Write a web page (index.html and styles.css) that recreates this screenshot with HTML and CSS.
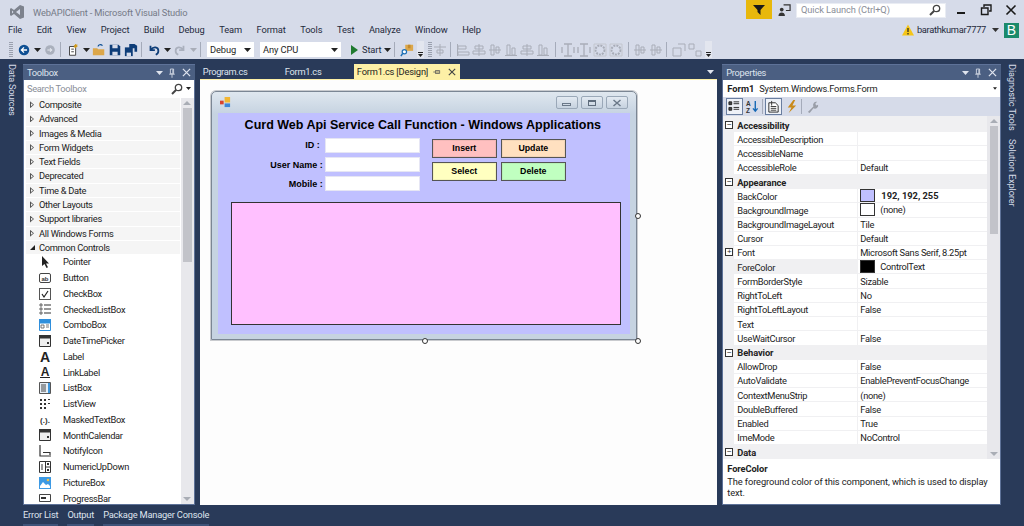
FILE: index.html
```html
<!DOCTYPE html>
<html lang="en">
<head>
<meta charset="utf-8">
<title>WebAPIClient - Microsoft Visual Studio</title>
<link rel="stylesheet" href="styles.css">
</head>
<body>
<svg class="defs" aria-hidden="true">
  <symbol id="arrow" viewBox="0 0 7 4"><path d="M0 0h7L3.500 4z" fill="currentColor"/></symbol>
  <symbol id="pin" viewBox="0 0 10 12"><path d="M3 1h4v6H3zM1.500 7.500h7M5 8v4M6 1.500v5" fill="none" stroke="currentColor"/></symbol>
  <symbol id="close" viewBox="0 0 10 10"><path d="M1 1l8 8M9 1l-8 8" stroke="currentColor" stroke-width="1.400"/></symbol>
  <symbol id="search" viewBox="0 0 12 12"><circle cx="7.500" cy="4.500" r="3.200" fill="none" stroke="currentColor" stroke-width="1.300"/><path d="M5 7l-4 4" stroke="currentColor" stroke-width="2"/></symbol>
  <symbol id="al" viewBox="0 0 14 14"><path d="M1.500 1v12M2 3h8v3H2zM2 9h11v3H2z" fill="none" stroke="#a9adb8"/></symbol>
  <symbol id="ac" viewBox="0 0 14 14"><path d="M7 1v12M3 3h8v3H3zM1 8h12v3H1z" fill="none" stroke="#a9adb8"/></symbol>
  <symbol id="am" viewBox="0 0 14 14"><path d="M1 7h12M3 2h3v10H3zM8 4h3v6H8z" fill="none" stroke="#a9adb8"/></symbol>
  <symbol id="ab" viewBox="0 0 14 14"><path d="M1 12.500h12M3 2h3v10H3zM8 5h3v7H8z" fill="none" stroke="#a9adb8"/></symbol>
  <symbol id="sz" viewBox="0 0 14 14"><path d="M3 1h8M3 13h8M7 1v12M1 4v6M13 4v6" fill="none" stroke="#a9adb8" stroke-width="1.300"/></symbol>
  <symbol id="gr" viewBox="0 0 14 14"><circle cx="7" cy="7" r="4.500" fill="none" stroke="#a9adb8" stroke-width="2" stroke-dasharray="2 1"/><path d="M1 1h12v12H1z" fill="none" stroke="#c3c6ce"/></symbol>
</svg>

<div class="app">
<header class="head">
  <div class="titlerow">
    <svg class="vslogo" viewBox="0 0 16 16"><path d="M11 1l4 1.500v11L11 15 5 10l-3 2-1-1V5l1-1 3 2z" fill="#7d828d"/><path d="M3 6.500v3L4.500 8zM11 5L7 8l4 3z" fill="#d6dbe9"/></svg>
    <span class="apptitle">WebAPIClient - Microsoft Visual Studio</span>
    <span class="spring"></span>
    <span class="filter"><svg viewBox="0 0 12 12"><path d="M0 1h12L7.500 6v5l-3-3V6z" fill="#1a1a1a"/></svg></span>
    <svg class="feedback" viewBox="0 0 14 14"><circle cx="4" cy="6" r="2" fill="#333"/><path d="M0.500 13c0-5 7-5 7 0z" fill="#333"/><path d="M6 1h7v6H8.500" fill="none" stroke="#333" stroke-width="1.300"/></svg>
    <div class="quick"><span>Quick Launch (Ctrl+Q)</span><svg class="i12"><use href="#search"/></svg></div>
    <div class="winbtns">
      <svg viewBox="0 0 12 12"><path d="M2 8h8v2H2z" fill="#1a1a1a"/></svg>
      <svg viewBox="0 0 12 12"><path d="M4 3V1h7v6H9M1.500 4h6.500v6.500H1.500z" fill="none" stroke="#1a1a1a" stroke-width="1.400"/></svg>
      <svg viewBox="0 0 12 12"><path d="M1.500 1.500l9 9M10.500 1.500l-9 9" stroke="#1a1a1a" stroke-width="1.600"/></svg>
    </div>
  </div>
  <div class="menurow">
    <nav class="menu"><span>File</span><span>Edit</span><span>View</span><span>Project</span><span>Build</span><span>Debug</span><span>Team</span><span>Format</span><span>Tools</span><span>Test</span><span>Analyze</span><span>Window</span><span>Help</span></nav>
    <span class="spring"></span>
    <svg class="warn" viewBox="0 0 12 12"><path d="M6 .5L12 11.500H0z" fill="#f5c518"/><path d="M6 4v4M6 9v1.500" stroke="#222" stroke-width="1.200"/></svg>
    <span class="user">barathkumar7777</span>
    <svg class="caret"><use href="#arrow"/></svg>
    <span class="avatar">B</span>
  </div>
  <div class="toolrow">
    <span class="grip"></span>
    <svg class="ti" viewBox="0 0 16 16"><circle cx="8" cy="8" r="6" fill="#0e4f93"/><path d="M11.500 8H5.500M8 5L5 8l3 3" fill="none" stroke="#fff" stroke-width="1.500"/></svg>
    <svg class="caret c-dark"><use href="#arrow"/></svg>
    <svg class="ti" viewBox="0 0 16 16"><circle cx="8" cy="8" r="5.500" fill="#aab0bd"/><path d="M5 8h5M8 6l2 2-2 2" fill="none" stroke="#e6e9f1" stroke-width="1.200"/></svg>
    <span class="sep"></span>
    <svg class="ti" viewBox="0 0 16 16"><path d="M4 4h7v10H4z" fill="#fff" stroke="#333"/><path d="M6 7h3M6 10h3" stroke="#333"/><path d="M11 1v5M9 3l4 1M13 2l-4 3" stroke="#d09a1e" stroke-width="1.200"/></svg>
    <svg class="caret c-dark"><use href="#arrow"/></svg>
    <svg class="ti" viewBox="0 0 16 16"><path d="M1 6h5l1 1h7v7H1z" fill="#dca74b"/><path d="M7 4c0-2 3-3 5-1" fill="none" stroke="#0e4f93" stroke-width="1.400"/></svg>
    <svg class="ti" viewBox="0 0 16 16"><path d="M2 2h10l2 2v10H2z" fill="#0e3d78"/><path d="M5 2h6v4H5zM5 10h6v4H5z" fill="#d6dbe9"/></svg>
    <svg class="ti" viewBox="0 0 16 16"><path d="M6 1h6l3 2v7h-3V6H6z" fill="#0e3d78"/><path d="M1 5h9v10H1z" fill="#0e3d78"/><path d="M3 11h5v4H3z" fill="#d6dbe9"/></svg>
    <span class="sep"></span>
    <svg class="ti" viewBox="0 0 16 16"><path d="M4 3v5h5M4.500 7.500C7 4 13 4 13 9c0 2-1 3.500-3 4.500" fill="none" stroke="#0e3d78" stroke-width="2"/></svg>
    <svg class="caret c-dark"><use href="#arrow"/></svg>
    <svg class="ti" viewBox="0 0 16 16"><path d="M12 3v5H7M11.500 7.500C9 4 3 4 3 9c0 2 1 3.500 3 4.500" fill="none" stroke="#aab0bd" stroke-width="2"/></svg>
    <svg class="caret c-gray"><use href="#arrow"/></svg>
    <span class="sep"></span>
    <div class="combo combo-a"><span>Debug</span><svg class="caret c-dark"><use href="#arrow"/></svg></div>
    <div class="combo combo-b"><span>Any CPU</span><svg class="caret c-dark"><use href="#arrow"/></svg></div>
    <svg class="play" viewBox="0 0 8 12"><path d="M1 1l7 5-7 5z" fill="#1f7a2f"/></svg>
    <span class="start">Start</span>
    <svg class="caret c-dark"><use href="#arrow"/></svg>
    <span class="sep"></span>
    <svg class="ti" viewBox="0 0 16 16"><path d="M6 2h9v7H6z" fill="#dca74b"/><path d="M9 2h3v4H9z" fill="#c28a2c"/><circle cx="5" cy="10" r="2.500" fill="#fff" stroke="#1b6fb5" stroke-width="1.400"/><path d="M3 12l-2 3" stroke="#1b6fb5" stroke-width="1.600"/></svg>
    <span class="over"><i></i><svg class="caret c-dark"><use href="#arrow"/></svg></span>
    <span class="grip grip2"></span>
    <svg class="ti" viewBox="0 0 14 14"><path d="M1 4h12M7 1v12M4 7h6v3H4z" fill="none" stroke="#a9adb8"/></svg>
    <span class="sep"></span>
    <svg class="ti"><use href="#al"/></svg><svg class="ti"><use href="#ac"/></svg><svg class="ti"><use href="#am"/></svg><svg class="ti"><use href="#ab"/></svg>
    <svg class="ti"><use href="#ac"/></svg><svg class="ti"><use href="#ab"/></svg>
    <span class="sep sep-w"></span>
    <svg class="ti"><use href="#sz"/></svg><svg class="ti"><use href="#sz"/></svg><svg class="ti"><use href="#gr"/></svg><svg class="ti"><use href="#gr"/></svg>
    <span class="sep sep-w"></span>
    <svg class="ti"><use href="#am"/></svg><svg class="ti"><use href="#am"/></svg>
    <span class="sep"></span>
    <svg class="ti" viewBox="0 0 14 14"><path d="M1 5h8v8H1zM6 1h7v7" fill="none" stroke="#a9adb8"/></svg>
    <svg class="ti" viewBox="0 0 14 14"><path d="M1 1h5v5H1zM8 8h5v5H8z" fill="none" stroke="#a9adb8"/></svg>
    <span class="over"><i></i><svg class="caret c-dark"><use href="#arrow"/></svg></span>
  </div>
</header>

<main class="work">
  <aside class="rail"><span class="railtab">Data Sources</span></aside>

  <section class="panel toolbox">
    <div class="ptitle"><span>Toolbox</span><svg class="caret"><use href="#arrow"/></svg><svg class="pin"><use href="#pin"/></svg><svg class="x"><use href="#close"/></svg></div>
    <div class="tbsearch"><span>Search Toolbox</span><svg class="i12"><use href="#search"/></svg><svg class="caret c-dark"><use href="#arrow"/></svg></div>
    <div class="tbbody">
      <div class="tblist">
        <div class="cat"><i class="tri"></i>Composite</div>
        <div class="cat"><i class="tri"></i>Advanced</div>
        <div class="cat"><i class="tri"></i>Images &amp; Media</div>
        <div class="cat"><i class="tri"></i>Form Widgets</div>
        <div class="cat"><i class="tri"></i>Text Fields</div>
        <div class="cat"><i class="tri"></i>Deprecated</div>
        <div class="cat"><i class="tri"></i>Time &amp; Date</div>
        <div class="cat"><i class="tri"></i>Other Layouts</div>
        <div class="cat"><i class="tri"></i>Support libraries</div>
        <div class="cat"><i class="tri"></i>All Windows Forms</div>
        <div class="cat"><i class="tri open"></i>Common Controls</div>
        <div class="tool"><svg viewBox="0 0 12 12"><path d="M3 0v10l2.500-2 2 4 1.500-.8L7 7.500h3z" fill="#222"/></svg>Pointer</div>
        <div class="tool"><svg viewBox="0 0 12 12"><rect x=".5" y="1.500" width="11" height="9" rx="1.500" fill="none" stroke="#444"/><text x="6" y="8.500" class="ic-t">ab</text></svg>Button</div>
        <div class="tool"><svg viewBox="0 0 12 12"><rect x=".5" y=".5" width="11" height="11" fill="none" stroke="#555"/><path d="M3 6l2 3 4-6" fill="none" stroke="#222" stroke-width="1.200"/></svg>CheckBox</div>
        <div class="tool"><svg viewBox="0 0 12 12"><path d="M1 1h2v2H1zM1 5h2v2H1zM1 9h2v2H1z" fill="none" stroke="#444" stroke-width=".8"/><path d="M5 2h7M5 6h7M5 10h7" stroke="#333" stroke-width="1.200"/></svg>CheckedListBox</div>
        <div class="tool"><svg viewBox="0 0 12 12"><path d="M0 0h12v4H0z" fill="#2f8fdc"/><path d="M.5 4h11v7.500H.5z" fill="#fff" stroke="#2f8fdc"/><path d="M2 6h3v3H2zM7 6h3M7 8h3" fill="none" stroke="#555" stroke-width=".8"/></svg>ComboBox</div>
        <div class="tool"><svg viewBox="0 0 12 12"><path d="M.5.5h11v11H.5z" fill="#eee" stroke="#333"/><path d="M0 0h12v3.500H0zM8 7h2v2H8z" fill="#333"/></svg>DateTimePicker</div>
        <div class="tool"><svg viewBox="0 0 12 12"><text x="6" y="11" class="ic-a">A</text></svg>Label</div>
        <div class="tool"><svg viewBox="0 0 12 12"><text x="6" y="10" class="ic-l">A</text><path d="M1 11.500h10" stroke="#222"/></svg>LinkLabel</div>
        <div class="tool"><svg viewBox="0 0 12 12"><path d="M.5.5h11v11H.5z" fill="#e6eef6" stroke="#555"/><path d="M9 1h2v10H9z" fill="#3d96dc"/><path d="M2 3h5M2 5h5M2 7h5M2 9h5" stroke="#444"/></svg>ListBox</div>
        <div class="tool"><svg viewBox="0 0 12 12"><path d="M1 1h2v2H1zM5 1h2v2H5zM9 1h2v1H9zM1 5h2v2H1zM5 5h2v2H5zM9 5h2v1H9zM1 9h2v2H1zM5 9h2v2H5z" fill="#333"/></svg>ListView</div>
        <div class="tool"><svg viewBox="0 0 12 12"><text x="6" y="9" class="ic-m">(.).</text></svg>MaskedTextBox</div>
        <div class="tool"><svg viewBox="0 0 12 12"><path d="M.5.5h11v11H.5z" fill="#eee" stroke="#333"/><path d="M0 0h12v3.500H0zM8 7h2v2H8z" fill="#333"/></svg>MonthCalendar</div>
        <div class="tool"><svg viewBox="0 0 12 12"><path d="M1 0v11h11M4 7.500h7V10" fill="none" stroke="#333" stroke-width="1.200"/></svg>NotifyIcon</div>
        <div class="tool"><svg viewBox="0 0 12 12"><path d="M.5.500h11v11H.5zM6.500.5v11M6.500 6h5M3 3v6" fill="none" stroke="#333"/><path d="M8 2h2v2H8zM8 8h2v2H8z" fill="#333"/></svg>NumericUpDown</div>
        <div class="tool"><svg viewBox="0 0 12 12"><path d="M0 0h12v12H0z" fill="#3d9ae4"/><path d="M1 9l3-4 3 3 2-1 2 2v2H1z" fill="#fff"/><circle cx="9" cy="3" r="1.300" fill="#f2c14b"/></svg>PictureBox</div>
        <div class="tool"><svg viewBox="0 0 12 12"><path d="M.5 2.500h11v7H.5z" fill="none" stroke="#444"/><path d="M2 5h5v2H2z" fill="#333"/></svg>ProgressBar</div>
      </div>
      <div class="scroll tbscroll"><i class="up"></i><b class="thumb"></b><span class="spring"></span><i class="down"></i></div>
    </div>
  </section>

  <section class="doc">
    <div class="tabs">
      <span class="tab">Program.cs</span>
      <span class="tab tab2">Form1.cs</span>
      <span class="tab active"><span class="tabname">Form1.cs [Design]</span><svg class="pin2" viewBox="0 0 10 8"><path d="M0 4h3M3 1.500v5M3.500 2h5v4h-5M3.500 4h5" fill="none" stroke="#555"/></svg><svg class="x2"><use href="#close"/></svg></span>
      <span class="spring"></span>
      <svg class="caret tabcaret"><use href="#arrow"/></svg>
    </div>
    <div class="canvas">
      <div class="window">
        <div class="wtitle">
          <svg class="wicon" viewBox="0 0 12 12"><path d="M5 0h6v6H5z" fill="#f2b632"/><path d="M0 4h4v4H0z" fill="#d8432e"/><path d="M5 7h6v4H5z" fill="#3d86d8"/></svg>
          <span class="spring"></span>
          <span class="wbtn wb1"><i class="wmin"></i></span>
          <span class="wbtn wb2"><i class="wmax"></i></span>
          <span class="wbtn wb3"><svg viewBox="0 0 10 8"><path d="M1.500 1l7 6M8.500 1l-7 6" stroke="#6a7888" stroke-width="1.500"/></svg></span>
        </div>
        <div class="client">
          <h1 class="ftitle">Curd Web Api Service Call Function - Windows Applications</h1>
          <div class="fmain">
            <div class="fields">
              <label class="flabel l-id">ID :</label><span class="fin"></span>
              <label class="flabel">User Name :</label><span class="fin"></span>
              <label class="flabel l-mo">Mobile :</label><span class="fin"></span>
            </div>
            <div class="btns">
              <span class="fbtn pink">Insert</span><span class="fbtn peach">Update</span>
              <span class="fbtn yellow">Select</span><span class="fbtn green">Delete</span>
            </div>
          </div>
          <div class="grid"></div>
        </div>
        <i class="handle h-r"></i><i class="handle h-b"></i><i class="handle h-c"></i>
      </div>
    </div>
  </section>

  <section class="panel props">
    <div class="ptitle"><span>Properties</span><svg class="caret"><use href="#arrow"/></svg><svg class="pin"><use href="#pin"/></svg><svg class="x"><use href="#close"/></svg></div>
    <div class="objsel"><b>Form1</b><span>System.Windows.Forms.Form</span><em></em><svg class="caret c-dark"><use href="#arrow"/></svg></div>
    <div class="ptools">
      <span class="pt on"><svg viewBox="0 0 14 14"><path d="M1 2h3v3H1zM1 8h3v3H1z" fill="#444" stroke="#222"/><path d="M6 2h6M6 4h6M6 8h6M6 10h6" stroke="#222"/></svg></span>
      <span class="pt"><svg viewBox="0 0 14 14"><text x="0" y="6.500" class="ic-z">A</text><text x="0" y="13.500" class="ic-z">Z</text><path d="M10 1v11M7.500 9l2.500 3 2.500-3" fill="none" stroke="#1769b5" stroke-width="1.500"/></svg></span>
      <span class="psep"></span>
      <span class="pt on"><svg viewBox="0 0 14 14"><path d="M2 3h7l3 3v7H2z" fill="#fff" stroke="#222"/><path d="M4 7h6M4 9h6M4 11h6M5 1v5" stroke="#333"/></svg></span>
      <span class="pt"><svg viewBox="0 0 14 14"><path d="M9 0L3 8h4l-3 6 8-8H8l3-6z" fill="#c98a1b"/></svg></span>
      <span class="psep"></span>
      <span class="pt"><svg viewBox="0 0 14 14"><path d="M2 13l6-6a3.500 3.500 0 0 1 4-5L10 4l1 2 2-1a3.500 3.500 0 0 1-5 4l-4 5z" fill="#9a9ea8"/></svg></span>
    </div>
    <div class="pbody">
      <div class="pgrid">
        <div class="pcat"><i class="box">&minus;</i>Accessibility</div>
        <div class="prow"><span>AccessibleDescription</span><span></span></div>
        <div class="prow"><span>AccessibleName</span><span></span></div>
        <div class="prow"><span>AccessibleRole</span><span>Default</span></div>
        <div class="pcat"><i class="box">&minus;</i>Appearance</div>
        <div class="prow"><span>BackColor</span><span class="val"><i class="sw" ></i><b>192, 192, 255</b></span></div>
        <div class="prow"><span>BackgroundImage</span><span class="val"><i class="sw sw-w"></i>(none)</span></div>
        <div class="prow"><span>BackgroundImageLayout</span><span>Tile</span></div>
        <div class="prow"><span>Cursor</span><span>Default</span></div>
        <div class="prow plus"><i class="box">+</i><span>Font</span><span>Microsoft Sans Serif, 8.25pt</span></div>
        <div class="prow sel"><span>ForeColor</span><span class="val"><i class="sw sw-k"></i>ControlText</span></div>
        <div class="prow"><span>FormBorderStyle</span><span>Sizable</span></div>
        <div class="prow"><span>RightToLeft</span><span>No</span></div>
        <div class="prow"><span>RightToLeftLayout</span><span>False</span></div>
        <div class="prow"><span>Text</span><span></span></div>
        <div class="prow"><span>UseWaitCursor</span><span>False</span></div>
        <div class="pcat"><i class="box">&minus;</i>Behavior</div>
        <div class="prow"><span>AllowDrop</span><span>False</span></div>
        <div class="prow"><span>AutoValidate</span><span>EnablePreventFocusChange</span></div>
        <div class="prow"><span>ContextMenuStrip</span><span>(none)</span></div>
        <div class="prow"><span>DoubleBuffered</span><span>False</span></div>
        <div class="prow"><span>Enabled</span><span>True</span></div>
        <div class="prow"><span>ImeMode</span><span>NoControl</span></div>
        <div class="pcat"><i class="box">&minus;</i>Data</div>
      </div>
      <div class="scroll pscroll"><i class="up"></i><b class="thumb"></b><span class="spring"></span><i class="down"></i></div>
    </div>
    <div class="pdesc"><b>ForeColor</b><p>The foreground color of this component, which is used to display text.</p></div>
  </section>

  <aside class="rail rail-r"><span class="railtab">Diagnostic Tools</span><span class="railtab">Solution Explorer</span></aside>
</main>

<footer class="status"><span>Error List</span><span>Output</span><span>Package Manager Console</span></footer>
</div>
</body>
</html>
```
FILE: styles.css
```css
* { box-sizing: border-box; }
html, body { margin: 0; height: 100%; }
body { font: 9.300px/1 Roboto, "Noto Sans", sans-serif; letter-spacing: -.3px; color: #222; overflow: hidden; background: #293a59; white-space: nowrap; }
.defs { position: absolute; width: 0; height: 0; }
.app { width: 1024px; height: 526px; display: flex; flex-direction: column; }
.spring { flex: 1; }
svg { display: block; flex: none; overflow: visible; }
i, em { display: block; font-style: normal; }
.i12 { width: 12px; height: 12px; color: #444; }
.caret { width: 7px; height: 4px; color: #333; }
.c-dark { color: #222; }
.c-gray { color: #a9adb8; }

/* header */
.head { height: 59px; background: #d6dbe9; display: flex; flex-direction: column; }
.titlerow { height: 20px; display: flex; align-items: center; }
.vslogo { width: 16px; height: 16px; margin: 3px 0 0 9px; }
.apptitle { margin: 6px 0 0 8px; color: #757a87; letter-spacing: -.15px; }
.filter { width: 26px; height: 19px; background: #e8b80c; display: flex; align-items: center; justify-content: center; align-self: flex-start; }
.filter svg { width: 12px; height: 12px; }
.feedback { width: 13px; height: 13px; margin: 0 5px 0 6px; }
.quick { width: 150px; height: 15px; background: #fff; display: flex; align-items: center; justify-content: space-between; padding: 0 4px; color: #8a8e98; border: 1px solid #e9ecf3; letter-spacing: -.1px; }
.winbtns { display: flex; width: 78px; padding-left: 9px; gap: 13px; }
.winbtns svg { width: 12px; height: 12px; }
.menurow { height: 20px; display: flex; align-items: center; padding-right: 5px; }
.menu { display: flex; gap: 14.500px; padding-left: 8px; color: #1f2a3c; letter-spacing: -.1px; }
.warn { width: 12px; height: 12px; }
.user { margin: 0 6px 0 3px; color: #1f2a3c; }
.avatar { width: 15px; height: 15px; margin-left: 5px; background: #1b8a6b; color: #fff; font: 14px/15px "Liberation Sans", sans-serif; letter-spacing: 0; text-align: center; }
.toolrow { height: 19px; display: flex; align-items: center; padding-left: 9px; }
.ti { width: 14px; height: 14px; margin: 0 1px; }
.toolrow .caret { margin: 0 1.500px; }
.grip { width: 4px; height: 15px; margin-right: 3px; background: repeating-linear-gradient(0deg, #9aa0ae 0 1px, transparent 1px 2px); }
.grip2 { margin: 0 0 0 4px; }
.sep { width: 1px; height: 15px; background: #a5abba; margin: 0 4px 0 2px; }
.sep-w { margin-left: 4px; }
.sep-w + .ti + .ti + .ti + .ti + .sep-w { margin-right: 3px; }
.combo { height: 15px; background: #fff; display: flex; align-items: center; justify-content: space-between; padding: 0 2px 0 3px; margin: 0 6px 0 2px; color: #1e1e1e; letter-spacing: -.1px; }
.combo-a { width: 47px; }
.combo-b { width: 81px; margin-left: 0; }
.play { width: 8px; height: 12px; margin: 0 4px 0 3px; }
.start { color: #1f2a3c; width: 20px; letter-spacing: -.1px; }
.over { width: 7px; height: 17px; margin-left: 2px; background: #e3e6ef; display: flex; flex-direction: column; align-items: center; justify-content: flex-end; padding-bottom: 1px; }
.over i { width: 5px; height: 1px; background: #222; margin-bottom: 1px; }
.toolrow .over .caret { margin: 0; width: 5px; height: 3px; }

/* work */
.work { flex: 1; display: flex; min-height: 0; padding: 5px 0 0; background: #293a59; }
.rail { width: 23px; display: flex; flex-direction: column; align-items: flex-start; gap: 8px; padding-left: 8px; }
.rail-r { width: 21px; margin-left: 2px; padding-left: 5px; letter-spacing: -.15px; }
.railtab { writing-mode: vertical-rl; color: #d7dce8; }
.panel { display: flex; flex-direction: column; background: #fff; border: 1px solid #5e7298; border-top: 0; }
.ptitle { height: 16px; background: #4b5f82; color: #dfe4ee; display: flex; align-items: center; padding: 0 4px 0 4px; margin: 0 -1px; flex: none; border-top: 1px solid #5e7298; }
.ptitle span { flex: 1; }
.ptitle .caret { color: #dfe4ee; }
.pin { width: 8px; height: 10px; margin-left: 5px; color: #dfe4ee; }
.x { width: 9px; height: 9px; margin-left: 6px; color: #dfe4ee; }

.toolbox { width: 172px; margin-right: 5px; }
.tbsearch { height: 15px; flex: none; display: flex; align-items: center; padding: 0 3px; color: #8a8e98; margin-top: 1px; }
.tbsearch span { flex: 1; }
.tbsearch .caret { margin-left: 3px; width: 5px; height: 3px; }
.tbbody { flex: 1; display: flex; min-height: 0; padding-top: 2px; }
.tblist { flex: 1; padding: 0 1px 0 2px; overflow: hidden; }
.cat { height: 14.300px; background: #f5f5f5; border-bottom: 1px solid #fff; display: flex; align-items: center; padding-left: 4px; }
.tri { position: relative; width: 4px; height: 7px; background: #555; clip-path: polygon(0 0, 100% 50%, 0 100%); margin-right: 5px; }
.tri::after { content: ""; position: absolute; left: 1px; top: 2px; width: 2px; height: 3px; background: #f5f5f5; clip-path: polygon(0 0, 100% 50%, 0 100%); }
.tri.open { width: 5px; height: 5px; background: #222; clip-path: polygon(100% 0, 100% 100%, 0 100%); margin-right: 4px; }
.tri.open::after { display: none; }
.tool { height: 15.750px; display: flex; align-items: center; padding-left: 13px; }
.tool svg { width: 12px; height: 12px; margin-right: 12px; }
.cat + .tool { margin-top: -1px; }
.ic-t { font: bold 6px "Liberation Sans", sans-serif; letter-spacing: 0; text-anchor: middle; fill: #333; }
.ic-a { font: bold 14px "Liberation Sans", sans-serif; letter-spacing: 0; text-anchor: middle; fill: #222; }
.ic-l { font: bold 12px "Liberation Sans", sans-serif; letter-spacing: 0; text-anchor: middle; fill: #222; }
.ic-m { font: bold 8px "Liberation Sans", sans-serif; letter-spacing: 0; text-anchor: middle; fill: #333; }
.ic-z { font: bold 7px "Liberation Sans", sans-serif; letter-spacing: 0; fill: #333; }
.scroll { background: #e8e8ec; display: flex; flex-direction: column; align-items: center; flex: none; }
.scroll .up { width: 0; height: 0; border: 4px solid transparent; border-top: 0; border-bottom: 4px solid #a9adb5; margin-top: 3px; }
.scroll .down { width: 0; height: 0; border: 4px solid transparent; border-bottom: 0; border-top: 4px solid #a9adb5; margin-bottom: 3px; }
.thumb { background: #c2c3c9; display: block; }
.tbscroll { width: 13px; }
.tbscroll .thumb { width: 9px; height: 154px; margin-top: 3px; }

/* doc */
.doc { width: 518px; margin-right: 5px; display: flex; flex-direction: column; }
.tabs { height: 15px; display: flex; align-items: center; color: #dfe4ee; background: #293a59; flex: none; }
.tab { height: 15px; padding: 1px 3px 0; display: flex; align-items: center; }
.tab:first-child { width: 82px; }
.tab2 { width: 72px; }
.active { width: 106px; background: #fdf0a6; color: #1e1e1e; }
.tabname { width: 74px; letter-spacing: -.2px; }
.pin2 { width: 8px; height: 6px; margin-left: 2px; }
.x2 { width: 8px; height: 8px; margin-left: 7px; color: #444; }
.tabcaret { margin-right: 3px; color: #dfe4ee; }
.canvas { flex: 1; background: #fdfdfd; border-top: 1px solid #fdf0a6; padding: 11px 0 0 11px; }

.window { position: relative; width: 426px; height: 249px; border: 1px solid #7b8694; border-radius: 5px 5px 0 0; background: linear-gradient(180deg, #dfe7ef 0, #c6d3e1 22px, #c6d3e1 100%); padding: 0 6px 5px 6px; display: flex; flex-direction: column; box-shadow: 0 0 0 1px #c9cbcf; letter-spacing: 0; }
.wtitle { height: 21px; display: flex; align-items: center; flex: none; padding-right: 2px; gap: 3px; }
.wicon { width: 11px; height: 11px; margin: 0 0 0 2px; }
.wbtn { height: 13px; border: 1px solid #9aa8b8; border-radius: 2px; background: linear-gradient(180deg, #e3eaf2, #c6d2df); display: flex; align-items: center; justify-content: center; }
.wb1, .wb2, .wb3 { width: 22px; }
.wb3 svg { width: 10px; height: 8px; }
.wmin { width: 9px; height: 3px; border: 1px solid #6a7888; margin-top: 3px; }
.wmax { width: 8px; height: 6px; border: 1px solid #5e6c7c; border-top-width: 2px; }
.client { flex: 1; background: #c0c0ff; padding: 0 9px 0 13px; display: flex; flex-direction: column; }
.ftitle { margin: 0; height: 24px; padding-right: 6px; font: bold 12.500px/24px "Liberation Sans", sans-serif; color: #000; text-align: center; flex: none; }
.fmain { display: flex; height: 65px; flex: none; }
.fields { width: 176px; margin-left: 13px; display: grid; grid-template-columns: 80px 95px; grid-auto-rows: 15px; row-gap: 4px; column-gap: 1px; padding-top: 1px; align-items: center; }
.flabel { font: bold 9px "Liberation Sans", sans-serif; color: #000; text-align: right; padding-right: 1px; }
.l-id { padding-right: 4px; margin-top: -1px; }
.fin { background: #fff; border: 1px solid #e6e6f4; height: 15px; }
.btns { margin-left: 12px; display: grid; grid-template-columns: 65px 65px; grid-auto-rows: 19px; gap: 4px; padding-top: 2px; }
.fbtn { border: 1px solid #555; box-shadow: inset 0 0 0 1px rgba(0,0,0,.05); font: bold 8.800px/17px "Liberation Sans", sans-serif; color: #000; text-align: center; }
.pink { background: #ffc0c0; }
.peach { background: #ffe0c0; }
.yellow { background: #ffffc0; }
.green { background: #c0ffc0; }
.grid { height: 123px; background: #ffc0ff; border: 1px solid #333; flex: none; }
.handle { position: absolute; width: 6px; height: 6px; border: 1px solid #333; border-radius: 50%; background: #fff; }
.h-r { left: 423px; top: 121px; }
.h-b { left: 423px; top: 246px; }
.h-c { left: 210px; top: 246px; }

/* properties */
.props { width: 279px; }
.objsel { height: 17px; flex: none; display: flex; align-items: center; padding: 0 3px 0 4px; color: #222; }
.objsel b { margin-right: 5px; letter-spacing: 0; }
.objsel span { letter-spacing: -.25px; }
.objsel em { flex: 1; }
.objsel .caret { width: 4px; height: 3px; }
.ptools { height: 19px; flex: none; background: #d6dbe9; display: flex; align-items: center; padding-left: 3px; }
.pt { width: 17px; height: 17px; display: flex; align-items: center; justify-content: center; margin-right: 1px; border: 1px solid transparent; }
.pt svg { width: 13px; height: 13px; }
.pt.on { border-color: #6a7ea0; background: #eef1f7; }
.psep { width: 1px; height: 15px; background: #a5abba; margin: 0 2px 0 0; }
.pbody { flex: 1; min-height: 0; display: flex; background: #f0f0f2; }
.pgrid { flex: 1; min-width: 0; padding-top: 2px; }
.pcat { height: 14.220px; font-weight: 700; letter-spacing: -.1px; display: flex; align-items: center; background: #f0f0f2; padding: 1px 0 0 14px; position: relative; }
.box { position: absolute; left: 2px; top: 3px; width: 8px; height: 8px; border: 1px solid #333; background: #fff; font: 8px/6px "Liberation Sans", sans-serif; letter-spacing: 0; text-align: center; }
.prow { position: relative; height: 14.220px; margin-left: 11px; display: grid; grid-template-columns: 123px 1fr; align-items: stretch; background: #fff; border-bottom: 1px solid #f0f0f2; }
.prow > span { display: flex; align-items: center; padding: 1px 0 0 3px; min-width: 0; }
.prow > span + span { border-left: 1px solid #f0f0f2; padding-left: 2px; }
.prow > .val { padding-top: 0; }
.prow.sel > span:first-of-type { background: #f0f0f2; }
.plus .box { left: -9px; top: 2px; }
.val { gap: 5px; }
.sw { width: 15px; height: 13px; background: #c0c0ff; border: 1px solid #333; }
.sw-w { background: #fff; }
.sw-k { background: #000; }
.val b { margin-left: 1px; letter-spacing: 0; }
.pscroll { width: 13px; }
.pscroll .thumb { width: 8px; height: 108px; margin-top: 3px; }
.pdesc { height: 45px; flex: none; padding: 5px 5px 0 4px; background: #fff; white-space: normal; letter-spacing: -.1px; }
.pdesc b { display: block; margin-bottom: 3px; }
.pdesc p { margin: 0; line-height: 11px; }

/* status */
.status { height: 21px; background: #293a59; color: #dfe4ee; display: flex; padding-left: 23px; gap: 9px; flex: none; align-items: flex-end; letter-spacing: -.2px; }
.status span { height: 19px; line-height: 16px; border-bottom: 2px solid #3e5379; }
```
